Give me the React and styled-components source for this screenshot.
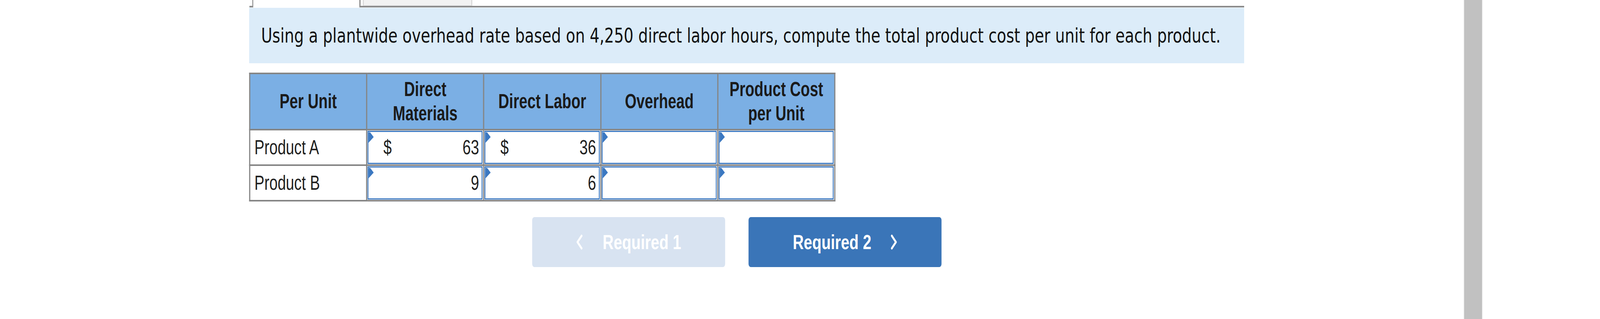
import React from "react";
import styled, { createGlobalStyle } from "styled-components";

const DESIGN_WIDTH = 5472;

const GlobalStyle = createGlobalStyle`
  html, body {
    margin: 0;
    padding: 0;
    background: #ffffff;
  }
  body {
    font-family: "Liberation Sans", Arial, sans-serif;
    color: #1d1d1d;
    overflow: hidden;
  }
`;

// the page is drawn at the screenshot's width and fitted to the window
const Stage = styled.div`
  width: ${DESIGN_WIDTH}px;
  height: 817px;
  transform-origin: 0 0;
`;

const Page = styled.div`
  display: flex;
  flex-flow: row nowrap;
  width: 100%;
  height: 100%;
  overflow: hidden;
`;

const Content = styled.div`
  flex: 0 0 5005px;
  display: flex;
  flex-flow: column nowrap;
  padding-left: 852px;
  box-sizing: border-box;
  overflow: hidden;
`;

const Scrollbar = styled.div`
  flex: 0 0 66px;
  display: flex;
  padding: 0 3px;
  box-sizing: border-box;
  background: #f1f1f1;
`;

const ScrollThumb = styled.div`
  flex: 1;
  background: #c1c1c1;
  border-left: 1px solid #b6b6b6;
  border-right: 1px solid #b6b6b6;
`;

/* tab strip above the instruction banner */
const TabBar = styled.div`
  display: flex;
  flex-flow: row nowrap;
  flex: 0 0 19px;
  width: 3403px;
  padding-left: 1px;
  box-sizing: border-box;
`;

const TabLead = styled.div`
  flex: 0 0 10px;
  border-bottom: 4px solid #8a8a8a;
`;

const ActiveTab = styled.div`
  flex: 0 0 363px;
  background: #ffffff;
  border-left: 3px solid #8a8a8a;
  border-right: 4px solid #8a8a8a;
`;

const TabRest = styled.div`
  flex: 1;
  display: flex;
  padding-left: 8px;
  border-bottom: 4px solid #8a8a8a;
`;

const InactiveTab = styled.div`
  width: 368px;
  height: 13px;
  background: #f2f2f2;
  border-left: 3px solid #d4d4d4;
  border-right: 3px solid #d4d4d4;
  border-bottom: 2px solid #e2e2e2;
`;

const Banner = styled.div`
  display: flex;
  align-items: center;
  flex: 0 0 142px;
  width: 3403px;
  margin-top: 1px;
  padding-left: 41px;
  box-sizing: border-box;
  background: #dcecf9;
  font-family: "DejaVu Sans", Verdana, sans-serif;
  font-size: 52.2px;
  color: #111111;
  white-space: nowrap;
`;

const Table = styled.table`
  flex: 0 0 auto;
  margin-top: 24px;
  width: 2005px;
  table-layout: fixed;
  border-collapse: collapse;
  border: 4px solid #858585;
  font-family: "Liberation Sans", Arial, sans-serif;
  font-size: 51px;
`;

const HeadCell = styled.th`
  height: 140px;
  padding: 0 8px;
  border: 4px solid #858585;
  background: #7bafe4;
  font-weight: bold;
  line-height: 62px;
  text-align: center;
  color: #1a1a1a;
`;

const LabelCell = styled.td`
  height: 87px;
  padding: 0 0 0 14px;
  border: 4px solid #858585;
  background: #ffffff;
  color: #1f1f1f;
  text-align: left;
  white-space: nowrap;
`;

const InputCell = styled.td`
  height: 87px;
  padding: 0;
  border: 4px solid #858585;
  background: #ffffff;
`;

const InputBox = styled.div`
  position: relative;
  display: flex;
  align-items: center;
  height: 85px;
  margin: 0 2px 0 1px;
  padding: 0 9px 0 51px;
  box-sizing: border-box;
  border: 3px solid #3b78c1;
  color: #1f1f1f;
`;

const Marker = styled.svg`
  position: absolute;
  top: 1px;
  left: 0;
`;

const Amount = styled.span`
  margin-left: auto;
`;

const ButtonRow = styled.div`
  display: flex;
  flex-flow: row nowrap;
  gap: 80px;
  margin-top: 40px;
  padding-left: 968px;
`;

const NavButton = styled.button`
  flex: 0 0 660px;
  display: flex;
  align-items: center;
  justify-content: center;
  gap: ${(p) => (p.$disabled ? "67px" : "65px")};
  height: 128px;
  padding: 0;
  border: none;
  border-radius: 8px;
  background: ${(p) => (p.$disabled ? "#d8e3f1" : "#3a75b8")};
  color: #ffffff;
  font-family: "Liberation Sans", Arial, sans-serif;
  font-size: 52px;
  font-weight: bold;
  cursor: ${(p) => (p.$disabled ? "default" : "pointer")};
`;

function Chevron({ dir }) {
  const pts = dir === "left" ? "19,4 5,20 19,36" : "5,4 19,20 5,36";
  return (
    <svg width="24" height="40" viewBox="0 0 24 40">
      <polyline
        points={pts}
        fill="none"
        stroke="#ffffff"
        strokeWidth="6"
        strokeLinecap="round"
        strokeLinejoin="round"
      />
    </svg>
  );
}

function Entry({ dollar, value }) {
  return (
    <InputBox>
      <Marker width="19" height="27" viewBox="0 0 19 27">
        <polygon points="0,0 6,0 18,12 0,27" fill="#3b78c1" />
      </Marker>
      {dollar && <span>$</span>}
      {value !== undefined && <Amount>{value}</Amount>}
    </InputBox>
  );
}

const rows = [
  { name: "Product A", dm: 63, dl: 36, dollar: true },
  { name: "Product B", dm: 9, dl: 6, dollar: false },
];

export default function App() {
  const fit = Math.min(1, window.innerWidth / DESIGN_WIDTH);
  return (
    <Stage style={{ transform: `scaleX(${fit})` }}>
      <GlobalStyle />
      <Page>
        <Content>
          <TabBar>
            <TabLead />
            <ActiveTab />
            <TabRest>
              <InactiveTab />
            </TabRest>
          </TabBar>
          <Banner>
            Using a plantwide overhead rate based on 4,250 direct labor hours, compute the total product cost per unit for each product.
          </Banner>
          <Table>
            <thead>
              <tr>
                <HeadCell>Per Unit</HeadCell>
                <HeadCell>
                  Direct
                  <br />
                  Materials
                </HeadCell>
                <HeadCell>Direct Labor</HeadCell>
                <HeadCell>Overhead</HeadCell>
                <HeadCell>
                  Product Cost
                  <br />
                  per Unit
                </HeadCell>
              </tr>
            </thead>
            <tbody>
              {rows.map((r) => (
                <tr key={r.name}>
                  <LabelCell>{r.name}</LabelCell>
                  <InputCell>
                    <Entry dollar={r.dollar} value={r.dm} />
                  </InputCell>
                  <InputCell>
                    <Entry dollar={r.dollar} value={r.dl} />
                  </InputCell>
                  <InputCell>
                    <Entry />
                  </InputCell>
                  <InputCell>
                    <Entry />
                  </InputCell>
                </tr>
              ))}
            </tbody>
          </Table>
          <ButtonRow>
            <NavButton $disabled>
              <Chevron dir="left" />
              <span>Required 1</span>
            </NavButton>
            <NavButton>
              <span>Required 2</span>
              <Chevron dir="right" />
            </NavButton>
          </ButtonRow>
        </Content>
        <Scrollbar>
          <ScrollThumb />
        </Scrollbar>
      </Page>
    </Stage>
  );
}
